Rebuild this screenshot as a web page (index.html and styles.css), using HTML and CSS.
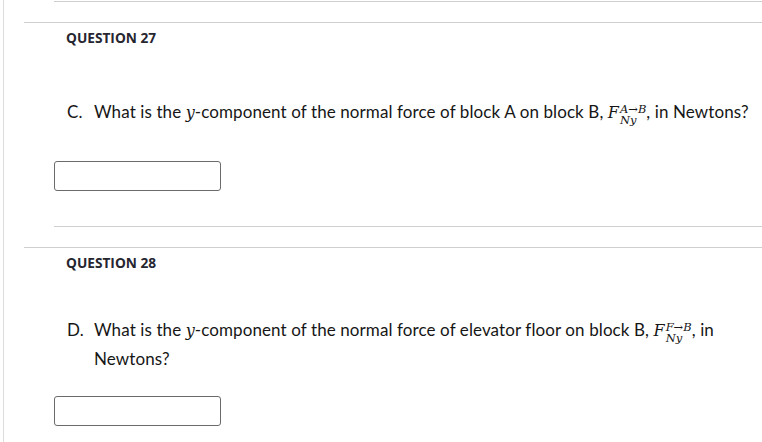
FILE: index.html
```html
<!DOCTYPE html>
<html>
<head>
<meta charset="utf-8">
<link rel="stylesheet" href="styles.css">
</head>
<body>
<div class="page">
  <section class="q q1">
    <div class="sep"></div>
    <div class="head"><h2 class="title">QUESTION 27</h2></div>
    <p class="text"><span class="lbl">C.</span><span class="body">What is the <i class="mv">y</i>-component of the normal force of block A on block B, <span class="math"><i class="mF">F</i><span class="ss"><span class="sup">A→B</span><span class="sub">Ny</span></span></span>, in Newtons?</span></p>
    <div class="field"><input class="inp" type="text"></div>
  </section>
  <section class="q q2">
    <div class="sep"></div>
    <div class="head"><h2 class="title">QUESTION 28</h2></div>
    <p class="text"><span class="lbl">D.</span><span class="body">What is the <i class="mv">y</i>-component of the normal force of elevator floor on block B, <span class="math"><i class="mF">F</i><span class="ss"><span class="sup">F→B</span><span class="sub">Ny</span></span></span>, in Newtons?</span></p>
    <div class="field"><input class="inp" type="text"></div>
  </section>
</div>
</body>
</html>
```
FILE: styles.css
```css
html, body { margin: 0; padding: 0; background: #fff; }
body { width: 762px; height: 442px; overflow: hidden; }
.page {
  margin-left: 3px;
  border-left: 1px solid #dcdcdc;
  height: 442px;
  box-sizing: border-box;
}
.q { display: block; }
.q1 { padding-top: 1px; }
.q2 { padding-top: 35px; }
.sep { margin-left: 50px; border-top: 1px solid #cfcfcf; height: 20px; }
.head { margin-left: 20px; border-top: 1px solid #cfcfcf; padding: 7px 0 0 42px; }
.title {
  margin: 0;
  font-family: "Open Sans", sans-serif;
  font-weight: 700;
  font-size: 13.7px;
  line-height: 16px;
  color: #262630;
}
.text {
  margin: 0;
  display: flex;
  padding-left: 63px;
  padding-right: 8px;
  font-family: Lato, "Open Sans", sans-serif;
  font-size: 17px;
  letter-spacing: 0.1px;
  line-height: 28px;
  color: #161616;
}
.q1 .text { margin-top: 52px; }
.q2 .text { margin-top: 45px; }
.lbl { width: 27px; flex: none; }
.body { flex: 1; }
.mv { font-family: "DejaVu Serif", serif; font-style: italic; font-size: 16px; letter-spacing: 0; }
.math { white-space: nowrap; letter-spacing: 0; }
.mF { font-family: "DejaVu Serif", serif; font-style: italic; font-size: 16px; }
.ss {
  display: inline-flex;
  flex-direction: column;
  vertical-align: 5px;
  line-height: 11px;
  font-family: "DejaVu Serif", serif;
  font-style: italic;
  font-size: 11.5px;
  margin-left: 1px;
}
.sub { margin-bottom: -4px; }
.field { padding-left: 50px; }
.q1 .field { margin-top: 34px; }
.q2 .field { margin-top: 23px; }
.inp {
  display: block;
  box-sizing: border-box;
  width: 167px;
  height: 30px;
  margin: 0;
  border: 1px solid #6b6b6b;
  border-radius: 3px;
  background: #fff;
  padding: 0 4px;
  outline: none;
}
```
